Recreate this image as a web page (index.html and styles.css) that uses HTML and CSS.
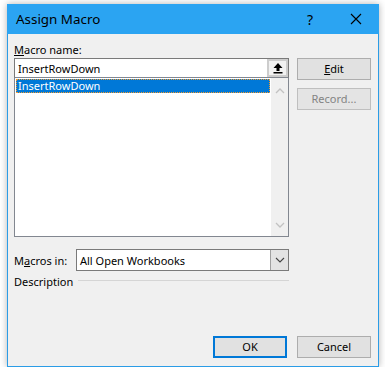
FILE: index.html
```html
<!DOCTYPE html>
<html lang="en">
<head>
    <meta charset="UTF-8">
    <title>Assign Macro</title>
    <link rel="stylesheet" href="styles.css">
</head>
<body>
    <div class="window">
        <!-- Title bar -->
        <div class="titlebar">
            <span class="title">Assign Macro</span>
            <span class="help">?</span>
            <svg class="close" width="12" height="12" viewBox="0 0 12 12">
                <path d="M1 1 L11 11 M11 1 L1 11" stroke="#000" stroke-width="1.1" fill="none"/>
            </svg>
        </div>

        <div class="content">
            <div class="top">
                <div class="main">
                    <div class="label"><u>M</u>acro name:</div>
                    <div class="name-input">
                        <span class="name-text">InsertRowDown</span>
                        <span class="upload">
                            <svg width="10" height="11" viewBox="0 0 10 11">
                                <path d="M5 0 L9.5 5 L6.5 5 L6.5 8 L3.5 8 L3.5 5 L0.5 5 Z" fill="#000"/>
                                <rect x="0.5" y="9" width="9" height="1.5" fill="#000"/>
                            </svg>
                        </span>
                    </div>
                    <div class="listbox">
                        <div class="items">
                            <div class="item selected">InsertRowDown</div>
                        </div>
                        <div class="scrollbar">
                            <svg width="10" height="6" viewBox="0 0 10 6">
                                <path d="M1 5 L5 1 L9 5" stroke="#c2c2c2" stroke-width="1.3" fill="none"/>
                            </svg>
                            <svg width="10" height="6" viewBox="0 0 10 6">
                                <path d="M1 1 L5 5 L9 1" stroke="#c2c2c2" stroke-width="1.3" fill="none"/>
                            </svg>
                        </div>
                    </div>
                </div>
                <div class="side">
                    <div class="button"><u>E</u>dit</div>
                    <div class="button disabled">Record...</div>
                </div>
            </div>

            <div class="macros-row">
                <span class="label">M<u>a</u>cros in:</span>
                <div class="combo">
                    <span class="combo-text">All Open Workbooks</span>
                    <span class="combo-btn">
                        <svg width="10" height="6" viewBox="0 0 10 6">
                            <path d="M1 1 L5 5 L9 1" stroke="#444" stroke-width="1.1" fill="none"/>
                        </svg>
                    </span>
                </div>
            </div>

            <div class="desc-row">
                <span class="label">Description</span>
                <span class="rule"></span>
            </div>

            <div class="footer">
                <div class="button default">OK</div>
                <div class="button">Cancel</div>
            </div>
        </div>
    </div>
</body>
</html>
```

FILE: styles.css
```css
body {
    margin: 0;
    background: #ffffff;
    font-family: "Noto Sans", "Open Sans", sans-serif;
    font-size: 11px;
    color: #000;
}
.window {
    margin: 4px 0 0 7px;
    width: 372px;
    height: 363px;
    box-sizing: border-box;
    border: 1px solid #2b9ce6;
    border-top: none;
    background: #f0f0f0;
    box-shadow: 0 0 7px rgba(0, 0, 0, 0.3);
    display: flex;
    flex-direction: column;
}
.titlebar {
    height: 30px;
    margin: 0 -1px;
    background: #2ba4f2;
    display: flex;
    align-items: center;
    padding-left: 9px;
    flex-shrink: 0;
}
.title {
    font-size: 13.4px;
    flex: 1;
    padding-bottom: 1px;
}
.help {
    font-size: 14px;
    margin-right: 37px;
}
.close {
    margin-right: 17px;
}
.content {
    flex: 1;
    display: flex;
    flex-direction: column;
    padding: 7px 7px 8px 6px;
}
.top {
    display: flex;
    gap: 8px;
}
.main {
    width: 275px;
    display: flex;
    flex-direction: column;
}
.label {
    height: 17px;
    line-height: 17px;
}
.name-input {
    height: 20px;
    box-sizing: border-box;
    border: 1px solid #7a7a7a;
    border-bottom-color: #828790;
    background: #fff;
    display: flex;
    align-items: center;
}
.name-text {
    flex: 1;
    padding-left: 3px;
}
.upload {
    width: 21px;
    height: 18px;
    box-sizing: border-box;
    border: 2px solid #cdcdcd;
    background: #f2f2f2;
    display: flex;
    align-items: center;
    justify-content: center;
}
.listbox {
    height: 159px;
    box-sizing: border-box;
    border: 1px solid #828790;
    border-top: none;
    background: #fff;
    display: flex;
}
.items {
    flex: 1;
    padding: 1px 1px 0 1px;
}
.item {
    height: 14px;
    line-height: 14px;
    padding-left: 2px;
}
.selected {
    background: #0078d7;
    color: #fff;
    outline: 1px dotted #f39a2c;
    outline-offset: -1px;
}
.scrollbar {
    width: 17px;
    background: #f0f0f0;
    display: flex;
    flex-direction: column;
    justify-content: space-between;
    align-items: center;
    padding: 10px 0 8px;
}
.side {
    width: 74px;
    padding-top: 17px;
    display: flex;
    flex-direction: column;
    gap: 8px;
}
.button {
    height: 22px;
    box-sizing: border-box;
    border: 1px solid #adadad;
    background: #e1e1e1;
    display: flex;
    align-items: center;
    justify-content: center;
    padding-bottom: 1px;
}
.button.disabled {
    color: #838383;
    border-color: #bfbfbf;
    background: #e4e4e4;
}
.button.default {
    border: 2px solid #0078d7;
}
.macros-row {
    margin-top: 12px;
    width: 275px;
    display: flex;
    align-items: center;
}
.macros-row .label {
    width: 62px;
    height: auto;
}
.combo {
    flex: 1;
    height: 22px;
    box-sizing: border-box;
    border: 1px solid #7a7a7a;
    background: #fff;
    display: flex;
    align-items: center;
}
.combo-text {
    flex: 1;
    padding-left: 3px;
}
.combo-btn {
    width: 18px;
    height: 20px;
    box-sizing: border-box;
    border-left: 1px solid #a0a0a0;
    background: #e3e3e3;
    display: flex;
    align-items: center;
    justify-content: center;
}
.desc-row {
    width: 275px;
    height: 18px;
    margin-top: 1px;
    display: flex;
    align-items: center;
}
.desc-row .label {
    height: auto;
    margin-right: 5px;
}
.rule {
    flex: 1;
    height: 1px;
    background: #d5d5d5;
    margin-top: -2px;
}
.footer {
    margin-top: auto;
    display: flex;
    justify-content: flex-end;
    gap: 10px;
}
.footer .button {
    width: 74px;
}
```
